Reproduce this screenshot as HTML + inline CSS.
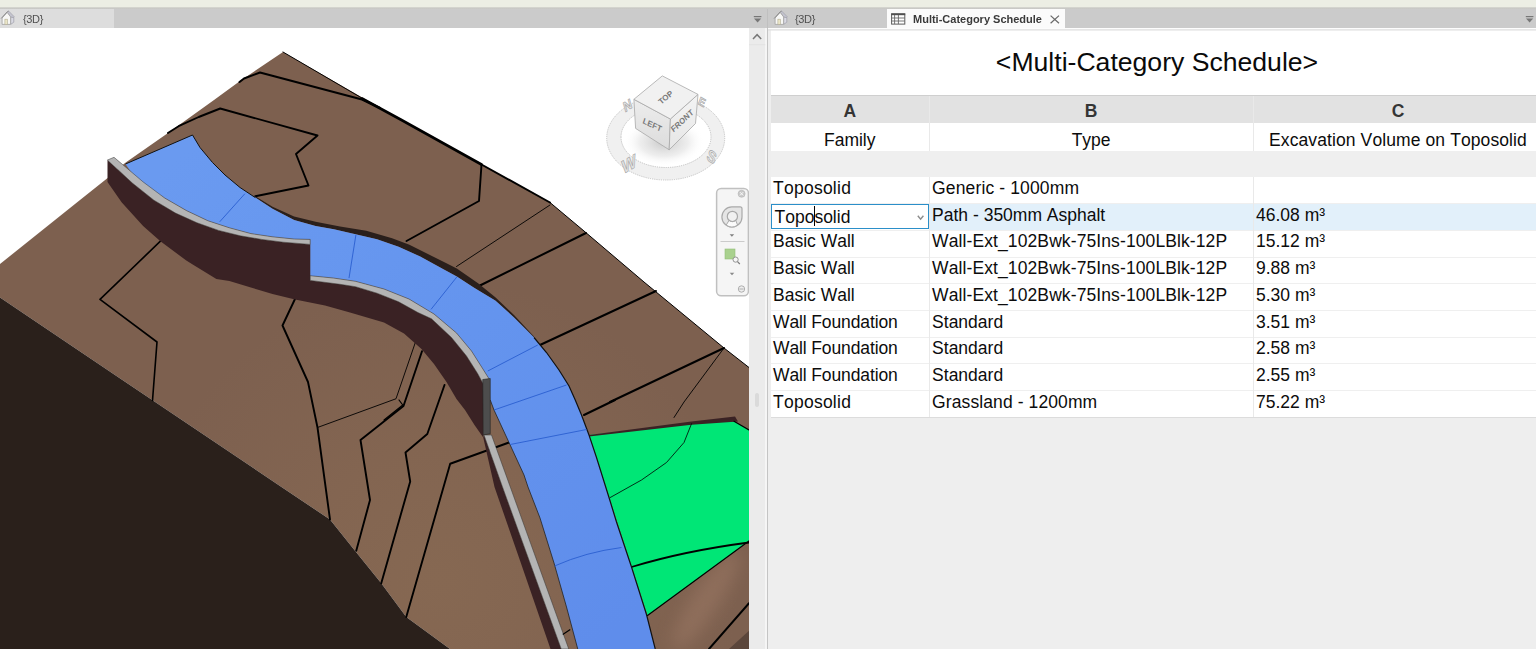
<!DOCTYPE html>
<html>
<head>
<meta charset="utf-8">
<title>Revit - Multi-Category Schedule</title>
<style>
html,body{margin:0;padding:0;}
body{width:1536px;height:649px;overflow:hidden;position:relative;background:#ffffff;font-family:"Liberation Sans",sans-serif;color:#111;}
.abs{position:absolute;}
#topstrip{left:0;top:0;width:1536px;height:8px;background:#eceee4;}
#topline{left:0;top:7px;width:1536px;height:2px;background:linear-gradient(#d9dad2,#c3c3c1);}
.tabbar{top:9px;height:19px;background:#cbcbcb;}
.tabtxt{will-change:transform;font-size:11px;color:#505050;letter-spacing:-0.35px;line-height:19px;top:9.5px;white-space:nowrap;}
#lscroll{left:749px;top:28px;width:18px;height:621px;background:linear-gradient(90deg,#ebebeb 0,#ebebeb 16.4px,#f5f5f5 16.4px,#f5f5f5 18px);}
#split{left:767px;top:9px;width:1px;height:640px;background:linear-gradient(#c0c0c0 0,#c0c0c0 19px,#c4c4c4 19px,#c4c4c4 100%);}
#rgut{left:768px;top:28px;width:768px;height:621px;background:#eeeeee;}
#sched{left:770.5px;top:30px;width:766px;height:619px;background:#eeeeee;}
.cell{position:absolute;white-space:nowrap;font-kerning:none;font-size:17.5px;line-height:26.7px;height:26.7px;color:#0c0c0c;}
.hdr{text-align:center;}
.vline{position:absolute;width:1px;background:#e9e9e9;}
.hline{position:absolute;height:1px;background:#efefef;left:0;width:766px;}
</style>
</head>
<body>
<!-- window top strip -->
<div id="topstrip" class="abs"></div>
<div id="topline" class="abs"></div>

<!-- LEFT PANE tab bar -->
<div class="abs tabbar" style="left:0;width:767px;"></div>
<div class="abs" style="left:0;top:9px;width:114px;height:19px;background:#dddddd;"></div>
<div class="abs tabtxt" style="left:22.5px;">{3D}</div>

<!-- RIGHT PANE tab bar -->
<div class="abs tabbar" style="left:768px;width:768px;"></div>
<div class="abs tabtxt" style="left:795px;">{3D}</div>
<div class="abs" style="left:886.5px;top:9px;width:178px;height:19px;background:#fbfbfb;"></div>
<div class="abs" style="left:913px;top:9.5px;font-size:11px;font-weight:bold;color:#3a3a3a;line-height:19px;white-space:nowrap;will-change:transform;">Multi-Category Schedule</div>

<!-- LEFT PANE 3D view -->
<div id="view3d" class="abs" style="left:0;top:28px;width:749px;height:621px;overflow:hidden;background:#fff;">
<svg id="scene" width="749" height="621" viewBox="0 28 749 621" style="position:absolute;left:0;top:0;">
<defs>
  <radialGradient id="gTerr" gradientUnits="userSpaceOnUse" cx="440" cy="580" r="300">
    <stop offset="0" stop-color="#866852"/><stop offset="0.45" stop-color="#836551"/><stop offset="1" stop-color="#7d604f"/>
  </radialGradient>
  <linearGradient id="gRoad" gradientUnits="userSpaceOnUse" x1="200" y1="140" x2="600" y2="640">
    <stop offset="0" stop-color="#6a9af0"/><stop offset="0.5" stop-color="#6494ee"/><stop offset="1" stop-color="#5f8deb"/>
  </linearGradient>
</defs>
<!-- terrain top surface -->
<polygon id="terrain" fill="url(#gTerr)" points="283,52 401.5,120 481.5,164.5 550,202.5 584,231 644,282 724,348 749,367.5 749,649 450,649 406.25,617 381.25,583.25 355,550.75 330,519.5 280,486 115,374.9 0,297.5 0,264 30,240 80,200 107,178.6 125,163 168,133 214,100 240,81"/>
<!-- terrain dark side -->
<polygon id="side" fill="#2a201b" points="0,297.5 115,374.9 280,486 330,519.5 355,550.75 381.25,583.25 406.25,617 450,649 0,649"/>
<defs><filter id="fBlur" x="-50%" y="-50%" width="200%" height="200%"><feGaussianBlur stdDeviation="8"/></filter></defs>
<ellipse cx="706" cy="600" rx="14" ry="58" transform="rotate(33 706 600)" fill="#9a7763" opacity="0.6" filter="url(#fBlur)"/>
<!-- darker bottom-right corner -->
<polygon fill="#5b463b" points="749,630.75 729,649 749,649"/>

<!-- contour lines on terrain -->
<g fill="none" stroke="#000" stroke-width="1.9" stroke-linejoin="round" stroke-linecap="round">
  <!-- thick outer right edge -->
  <polyline stroke-width="1" points="283,52 366,100.5"/>
  <polyline stroke-width="2.6" points="362,98.5 401.5,120 481.5,164.5"/>
  <polyline stroke-width="2" points="481.5,164.5 550,202.5"/>
  <polyline stroke-width="1" points="550,202.5 584,231 644,282 724,348 749,367.5"/>
  <!-- contour 1 -->
  <polyline stroke-width="2.1" points="239.5,82 244,78.5 260,72.5 362,99.5 380,108"/>
  <polyline points="481.5,164.5 479,201 406.5,241"/>
  <!-- contour 2 -->
  <polyline points="167.9,133 178.6,126.2 198.7,117 220.2,108.5 317.5,135.5 296,154 308.5,185.5 255.3,196.3"/>
  <!-- right-side lines -->
  <polyline stroke-width="0.9" points="550,205 456.5,266.5"/>
  <polyline stroke-width="2" points="586,233 480,285.5"/>
  <polyline stroke-width="2" points="656,291 540,345"/>
  <polyline stroke-width="2" points="724,348 610,402"/>
  <polyline stroke-width="0.9" points="724,348 684,402 674,417.5"/>
  <polyline stroke-width="2" points="615,400 584,415"/>
  <polyline stroke-width="2" points="749,603.25 709,649"/>
  <!-- lower-left contours -->
  <polyline stroke-width="1.6" points="160.4,241.2 100,299.4 157,342 152.5,400.5"/>
  <polyline points="295,299 282.5,325.5 308,382 317.5,427.5 330,519.5"/>
  <polyline stroke-width="0.9" points="317.5,427.5 396,398.75 415.75,341.25"/>
  <polyline points="422,351.25 403.5,406 360.5,440 370,500 356.25,550.75"/>
  <polyline points="444.5,385 427.3,434 405.5,452.5 410.2,481.5 381.25,583.25"/>
  <polyline points="509,442.5 450.2,463.75 406.25,617"/>
  <polyline stroke-width="1.2" points="399,400 402.75,405 384,420"/>
</g>

<!-- green grassland -->
<polygon fill="#00e676" points="589,435 691.5,423.75 734,421.25 749,430 749,541 647.5,615.5 630.25,562"/>
<polygon fill="#3a2224" points="589,435 691.5,421.5 735,416.5 738,421.5 691.5,424.75 589,436.5"/>
<g fill="none" stroke="#000" stroke-linecap="round">
  <polyline stroke-width="0.8" points="691.5,423.75 684,442.5 666.5,462.5 641.5,480 610.25,497.5"/>
  <path stroke-width="1.8" d="M631.5,567 Q684,551 749,542.5"/>
  <polyline stroke-width="1.2" points="647.5,615.5 749,541"/>
  <polyline stroke-width="1.2" points="734,421.25 749,430"/>
</g>

<!-- excavation dark strip above blue road -->
<polygon fill="#2a1f1b" points="255.3,196.3 272.5,206.7 294.1,216.4 315.6,221.8 340,226.5 366.3,230.7 392.1,238.2 409.4,244.7 430.9,255.5 456.8,268.4 478.4,283.5 495.6,297.5 514,315 534,336.5 534,337.5 514,317.5 495.6,300.8 474.1,287.8 456.8,276.6 443.9,269.5 420.2,256.5 398.6,246.8 377,239.3 355.5,234.3 333.9,229.2 315.6,226.1 294.1,220 272.5,208.8 255.3,197.6"/>
<!-- blue road -->
<polygon id="road" fill="url(#gRoad)" points="192.5,135 200,147.5 212.5,162.5 225,175 240,187.5 255.3,197.6 272.5,208.8 294.1,220 315.6,226.1 333.9,229.2 355.5,234.3 377,239.3 398.6,246.8 420.2,256.5 443.9,269.5 456.8,276.6 474.1,287.8 495.6,300.8 514,317.5 534,337.5 546.5,352.5 559,370 569,386 575.25,400 581.5,415 589,435 596.5,457.5 609,497.5 616.5,522 631.5,567 646.5,614.5 655.25,649 577.75,649 566.5,607 554,563 540,518 528,487 524,475 509,442.5 494,410 490.25,400 489,378.75 482.75,368.75 471.5,351 456.5,333 434,314 409,299 384,289 355.5,281.3 333.9,278.1 310.2,275.7 310.2,239.4 294.1,239 272.5,236.8 250.9,233.6 229.4,227.8 207.8,220.7 186.3,210.5 164.7,198 146.3,186.3 132.4,174 125.5,164"/>
<!-- road outline (thin dark) -->
<polyline fill="none" stroke="#111" stroke-width="1" points="125.5,164 192.5,135 200,147.5 212.5,162.5 225,175 240,187.5 255.3,197.6"/>
<polyline fill="none" stroke="#111" stroke-width="1.2" points="534,337.5 546.5,352.5 559,370 569,386 575.25,400 581.5,415 589,435 596.5,457.5 609,497.5 616.5,522 631.5,567 646.5,614.5 655.25,649"/>
<polyline fill="none" stroke="#222" stroke-width="0.8" points="490.25,400 494,410 509,442.5 524,475 528,487 540,518 554,563 566.5,607 577.75,649"/>
<!-- road joints -->
<g fill="none" stroke="#2a5fd0" stroke-width="0.9">
  <line x1="244.9" y1="193.7" x2="219.7" y2="221.8"/>
  <line x1="355.9" y1="235" x2="349" y2="278.1"/>
  <line x1="456.8" y1="277" x2="431" y2="309.4"/>
  <line x1="537.75" y1="345" x2="487.75" y2="371"/>
  <line x1="566.5" y1="385" x2="494" y2="410"/>
  <line x1="586.5" y1="429.5" x2="510.25" y2="444.5"/>
  <path d="M621.5,547.5 Q586,552 554.5,566"/>
</g>

<!-- wall 1 (maroon) -->
<polygon fill="#3a2224" points="107.5,160 118.3,170 132.3,183 153.9,200.2 175.5,213.1 197,222.8 218.6,230.4 240.2,235.8 261.7,239.4 283.3,242.2 310.2,244.4 310.2,280.4 340,284.3 355.5,286.7 377,293.2 398.6,301.8 418,312.6 431.5,318.75 451.5,337.5 466.5,356 477.75,373.75 483.25,384 483.25,437.5 474.5,425 465,410 456.5,399 446.5,382 434,364 421.5,349 404,333.5 384,322.5 350,312.5 325,305.5 295.1,299.4 272.5,294 250.9,287.5 229.4,281 216.4,278.9 186.3,260.6 160.4,241.2 143.1,226.1 121.6,202.3 107.5,181.9"/>
<!-- wall caps (grey) -->
<polygon fill="#b4b4b4" stroke="#333" stroke-width="0.5" points="107.5,160 114,157.3 129.1,170 143.1,181.9 164.7,198 186.3,210.5 207.8,220.7 229.4,227.8 250.9,233.6 272.5,236.8 294.1,239 310.2,239.4 310.2,244.4 283.3,242.2 261.7,239.4 240.2,235.8 218.6,230.4 197,222.8 175.5,213.1 153.9,200.2 132.3,183 118.3,170"/>
<polygon fill="#b4b4b4" stroke="#333" stroke-width="0.5" points="310.2,275.7 333.9,278.1 355.5,281.3 384,289 409,299 434,314 456.5,333 471.5,351 482.75,368.75 489,378.75 483.25,384 477.75,373.75 466.5,356 451.5,337.5 431.5,318.75 418,312.6 398.6,301.8 377,293.2 355.5,286.7 340,284.3 310.2,280.4"/>
<!-- wall end face (dark grey) -->
<polygon fill="#4d4d4d" stroke="#222" stroke-width="0.6" points="482.75,379.5 490.25,378.5 490.25,433.75 483.25,435"/>
<!-- lower foundation strips -->
<polygon fill="#3a2224" points="483.25,437.5 484,435 502.5,487 561.25,649 550.5,649 520.5,562 494.5,487"/>
<polygon fill="#b4b4b4" stroke="#333" stroke-width="0.5" points="484,435 491.5,435 510.3,487 568.75,649 561.25,649 502.5,487"/>
<polyline fill="none" stroke="#000" stroke-width="1.2" points="562.75,634.5 570.25,629.5"/>
<!--CUBE-START-->
<defs>
  <radialGradient id="gShadow" cx="0.5" cy="0.5" r="0.5"><stop offset="0" stop-color="#bdbdbd" stop-opacity="0.85"/><stop offset="0.6" stop-color="#d8d8d8" stop-opacity="0.45"/><stop offset="1" stop-color="#ffffff" stop-opacity="0"/></radialGradient>
  <linearGradient id="gLeft" x1="0" y1="0" x2="0" y2="1"><stop offset="0" stop-color="#ededed"/><stop offset="1" stop-color="#dcdcdc"/></linearGradient>
  <linearGradient id="gRight" x1="0" y1="0" x2="0" y2="1"><stop offset="0" stop-color="#f4f4f4"/><stop offset="1" stop-color="#e6e6e6"/></linearGradient>
</defs>
<g id="viewcube">
  <!-- compass ring -->
  <path fill="#f0f0f0" fill-rule="evenodd" stroke="#bdbdbd" stroke-width="0.9" stroke-dasharray="1.2 1" d="M606.7,138 a59,42 0 1,0 118,0 a59,42 0 1,0 -118,0 Z M621,137 a45,30.5 0 1,0 90,0 a45,30.5 0 1,0 -90,0 Z"/>
  <ellipse cx="664" cy="142" rx="40" ry="24" fill="url(#gShadow)"/>
  <g font-family="Liberation Sans, sans-serif" font-weight="bold" fill="#e3e3e3" stroke="#a4a4a4" stroke-width="0.6" text-anchor="middle" dominant-baseline="central">
    <text transform="translate(629,164) rotate(-30) skewX(-22)" font-size="17">W</text>
    <text transform="translate(711.8,156.5) rotate(36) skewX(18)" font-size="15">S</text>
    <text transform="translate(627.5,105.5) rotate(-34) skewX(-18)" font-size="13">N</text>
    <text transform="translate(702,101.8) rotate(30) skewX(10)" font-size="11">E</text>
  </g>
  <!-- cube -->
  <polygon points="633.9,99.3 670.4,119 669.2,149.8 635.6,128.4" fill="url(#gLeft)" stroke="#a8a8a8" stroke-width="0.8"/>
  <polygon points="670.4,119 698,94.4 695.5,123.5 669.2,149.8" fill="url(#gRight)" stroke="#a8a8a8" stroke-width="0.8"/>
  <polygon points="662.3,75.9 698,94.4 670.4,119 633.9,99.3" fill="#f1f1f1" stroke="#a8a8a8" stroke-width="0.8"/>
  <g font-family="Liberation Sans, sans-serif" fill="#787878" font-size="8" font-weight="bold" text-anchor="middle" letter-spacing="0.1">
    <text transform="translate(667.5,99.5) rotate(-40)">TOP</text>
    <text transform="translate(651.5,127.5) rotate(26) skewX(8)">LEFT</text>
    <text transform="translate(683.8,123) rotate(-43) skewX(-8)">FRONT</text>
  </g>
</g>
<g id="navbar">
  <rect x="716.6" y="188.4" width="31.8" height="107.4" rx="4.5" ry="4.5" fill="#f5f5f5" stroke="#c0c0c0" stroke-width="1.5"/>
  <circle cx="741.6" cy="193.8" r="3.5" fill="#c9c9c9" stroke="#b4b4b4" stroke-width="0.6"/>
  <path d="M740 192.2 l3.2 3.2 m0 -3.2 l-3.2 3.2" stroke="#fafafa" stroke-width="1"/>
  <!-- steering wheel -->
  <path d="M721.9,216.9 a10,10 0 0,1 10,-10 h8.2 q1.9,0 1.9,1.9 v8.1 a10,10 0 1,1 -20.1,0 Z" fill="#e5e5e5" stroke="#a9a9a9" stroke-width="1.2"/>
  <path d="M729.1,220.3 L726.2,225.1 A10,10 0 0,0 737.6,225.1 L735.7,220.3 A5.1,5.1 0 0,1 729.1,220.3 Z" fill="#fbfbfb" stroke="#ababab" stroke-width="1"/>
  <circle cx="732.4" cy="216.4" r="5.1" fill="#f1f1f1" stroke="#a9a9a9" stroke-width="1.2"/>
  <polygon points="729.6,234.3 734.2,234.3 731.9,236.8" fill="#808080"/>
  <line x1="720.5" y1="241.5" x2="744.5" y2="241.5" stroke="#c6c6c6" stroke-width="0.9"/>
  <!-- zoom region -->
  <rect x="725" y="249" width="10" height="10" fill="#a9d18e" stroke="#93bf78" stroke-width="0.6"/>
  <circle cx="735.6" cy="259.6" r="2.6" fill="#f6f6f6" stroke="#8a8a8a" stroke-width="0.9"/>
  <line x1="737.5" y1="261.6" x2="739.8" y2="264" stroke="#7a7a7a" stroke-width="1.2"/>
  <polygon points="729.7,272.8 734.3,272.8 732,275.2" fill="#8a8a8a"/>
  <circle cx="741.5" cy="289" r="3.2" fill="#ededed" stroke="#9e9e9e" stroke-width="0.8"/>
  <line x1="739.4" y1="289" x2="743.6" y2="289" stroke="#9e9e9e" stroke-width="0.8"/>
</g>
<!--CUBE-END-->
</svg>
</div>
<div id="lscroll" class="abs"></div>
<div class="abs" style="left:755px;top:393px;width:4px;height:14px;background:#dadada;border-radius:2px;"></div>
<div id="split" class="abs"></div>

<!-- RIGHT PANE schedule -->
<div id="rgut" class="abs"></div>
<div class="abs" style="left:768px;top:28px;width:768px;height:1px;background:#fdfdfd;"></div>
<div class="abs" style="left:768px;top:29px;width:768px;height:2px;background:#e6e6e6;"></div>
<div id="sched" class="abs">
  <!-- title -->
  <div class="abs" style="left:0;top:1px;width:766px;height:64.5px;background:#fff;"></div>
  <div class="abs" style="left:0;top:0;width:773px;height:65px;line-height:65px;text-align:center;font-size:26.6px;color:#0a0a0a;white-space:nowrap;">&lt;Multi-Category Schedule&gt;</div>
  <div class="abs" style="left:0;top:65px;width:766px;height:1px;background:#cfcfcf;"></div>
  <!-- header letters -->
  <div class="abs" style="left:0;top:66px;width:766px;height:27px;background:#e2e2e2;"></div>
  <!-- header names -->
  <div class="abs" style="left:0;top:93px;width:766px;height:27.6px;background:#fff;"></div>
  <!-- spacer row -->
  <div class="abs" style="left:0;top:120.6px;width:766px;height:26.4px;background:#efefef;"></div>
  <!-- data -->
  <div class="abs" style="left:0;top:147px;width:766px;height:240.3px;background:#fff;"></div>
  <div class="abs" style="left:0;top:387.3px;width:766px;height:1px;background:#dcdcdc;"></div>
<!--TABLE-START-->
  <div class="abs" style="left:158.5px;top:173.7px;width:608px;height:26.7px;background:#e2f0fa;"></div>
  <div class="hline" style="top:173.2px;"></div>
  <div class="hline" style="top:199.9px;"></div>
  <div class="hline" style="top:226.6px;"></div>
  <div class="hline" style="top:253.3px;"></div>
  <div class="hline" style="top:280.0px;"></div>
  <div class="hline" style="top:306.7px;"></div>
  <div class="hline" style="top:333.4px;"></div>
  <div class="hline" style="top:360.1px;"></div>
  <div class="vline" style="left:158.5px;top:66px;height:54.6px;"></div>
  <div class="vline" style="left:482.7px;top:66px;height:54.6px;"></div>
  <div class="vline" style="left:158.5px;top:147px;height:240.3px;"></div>
  <div class="vline" style="left:482.7px;top:147px;height:240.3px;"></div>
  <div class="cell hdr" style="left:0;width:158.5px;top:67.9px;font-weight:bold;font-size:17.5px;color:#353535;">A</div>
  <div class="cell hdr" style="left:158.5px;width:324.2px;top:67.9px;font-weight:bold;font-size:17.5px;color:#353535;">B</div>
  <div class="cell hdr" style="left:482.7px;width:289.6px;top:67.9px;font-weight:bold;font-size:17.5px;color:#353535;">C</div>
  <div class="cell hdr" style="left:0;width:158.5px;top:97.2px;">Family</div>
  <div class="cell hdr" style="left:158.5px;width:324.2px;top:97.2px;">Type</div>
  <div class="cell hdr" style="left:482.7px;width:289.6px;top:97.2px;letter-spacing:0.100px;">Excavation Volume on Toposolid</div>
  <div class="cell" style="left:2.5px;top:145.0px;letter-spacing:0.250px;">Toposolid</div>
  <div class="cell" style="left:161.6px;top:145.0px;letter-spacing:0.130px;">Generic - 1000mm</div>
  <div class="abs" style="left:0.5px;top:174.1px;width:155.6px;height:23.0px;border:1.6px solid #2b8fc9;background:#fff;"></div>
  <div class="cell" style="left:4px;top:173.8px;">Toposolid</div>
  <div class="abs" id="caret" style="left:43.4px;top:176.1px;width:1px;height:20px;background:#000;"></div>
  <svg class="abs" style="left:146.4px;top:184.9px;" width="8" height="6" viewBox="0 0 8 6"><path d="M0.8 0.8 L3.6 4.2 L6.4 0.8" fill="none" stroke="#8c8c8c" stroke-width="1.4"/></svg>
  <div class="cell" style="left:161.6px;top:171.7px;">Path - 350mm Asphalt</div>
  <div class="cell" style="left:485.5px;top:171.7px;">46.08 m³</div>
  <div class="cell" style="left:2.5px;top:198.4px;">Basic Wall</div>
  <div class="cell" style="left:161.6px;top:198.4px;letter-spacing:0.100px;">Wall-Ext_102Bwk-75Ins-100LBlk-12P</div>
  <div class="cell" style="left:485.5px;top:198.4px;">15.12 m³</div>
  <div class="cell" style="left:2.5px;top:225.1px;">Basic Wall</div>
  <div class="cell" style="left:161.6px;top:225.1px;letter-spacing:0.100px;">Wall-Ext_102Bwk-75Ins-100LBlk-12P</div>
  <div class="cell" style="left:485.5px;top:225.1px;">9.88 m³</div>
  <div class="cell" style="left:2.5px;top:251.8px;">Basic Wall</div>
  <div class="cell" style="left:161.6px;top:251.8px;letter-spacing:0.100px;">Wall-Ext_102Bwk-75Ins-100LBlk-12P</div>
  <div class="cell" style="left:485.5px;top:251.8px;">5.30 m³</div>
  <div class="cell" style="left:2.5px;top:278.5px;letter-spacing:-0.120px;">Wall Foundation</div>
  <div class="cell" style="left:161.6px;top:278.5px;">Standard</div>
  <div class="cell" style="left:485.5px;top:278.5px;">3.51 m³</div>
  <div class="cell" style="left:2.5px;top:305.2px;letter-spacing:-0.120px;">Wall Foundation</div>
  <div class="cell" style="left:161.6px;top:305.2px;">Standard</div>
  <div class="cell" style="left:485.5px;top:305.2px;">2.58 m³</div>
  <div class="cell" style="left:2.5px;top:331.9px;letter-spacing:-0.120px;">Wall Foundation</div>
  <div class="cell" style="left:161.6px;top:331.9px;">Standard</div>
  <div class="cell" style="left:485.5px;top:331.9px;">2.55 m³</div>
  <div class="cell" style="left:2.5px;top:358.6px;letter-spacing:0.250px;">Toposolid</div>
  <div class="cell" style="left:161.6px;top:358.6px;letter-spacing:0.100px;">Grassland - 1200mm</div>
  <div class="cell" style="left:485.5px;top:358.6px;">75.22 m³</div>
<!--TABLE-END-->
</div>
<!--CHROME-START-->
<!-- home icons -->
<svg class="abs" style="left:0;top:10px;" width="16" height="16" viewBox="0 10 16 16">
  <polygon points="10.6,16.8 13.8,17.4 13.8,22.2 10.6,24.4" fill="#d9d9e2" stroke="#a3a3ad" stroke-width="0.8"/>
  <polygon points="7.2,12.4 8.7,11.1 14.2,16.7 13.6,17.6 10.6,16.9" fill="#c4c4cf" stroke="#a0a0aa" stroke-width="0.7"/>
  <polygon points="2.1,18 7.2,12.4 10.6,16.9 10.6,24.4 2.1,24.4" fill="#f7f7f5" stroke="#a6a6a6" stroke-width="0.9"/>
  <polyline points="1.1,18.5 7.3,11.7 8.7,11.1" fill="none" stroke="#8e8e8e" stroke-width="1"/>
  <rect x="4.9" y="19.2" width="2.4" height="5.2" fill="#ebe6c8" stroke="#b3ad92" stroke-width="0.6"/>
</svg>
<svg class="abs" style="left:772.5px;top:10px;" width="16" height="16" viewBox="0 10 16 16">
  <polygon points="10.6,16.8 13.8,17.4 13.8,22.2 10.6,24.4" fill="#d9d9e2" stroke="#a3a3ad" stroke-width="0.8"/>
  <polygon points="7.2,12.4 8.7,11.1 14.2,16.7 13.6,17.6 10.6,16.9" fill="#c4c4cf" stroke="#a0a0aa" stroke-width="0.7"/>
  <polygon points="2.1,18 7.2,12.4 10.6,16.9 10.6,24.4 2.1,24.4" fill="#f7f7f5" stroke="#a6a6a6" stroke-width="0.9"/>
  <polyline points="1.1,18.5 7.3,11.7 8.7,11.1" fill="none" stroke="#8e8e8e" stroke-width="1"/>
  <rect x="4.9" y="19.2" width="2.4" height="5.2" fill="#ebe6c8" stroke="#b3ad92" stroke-width="0.6"/>
</svg>
<!-- schedule tab icon -->
<svg class="abs" style="left:891px;top:12.5px;" width="15" height="12" viewBox="0 0 15 12">
  <rect x="0.6" y="0.9" width="13.2" height="10.2" fill="#fff" stroke="#5c5c5c" stroke-width="1"/>
  <rect x="0.2" y="0.4" width="14" height="1.8" fill="#505050"/>
  <g stroke="#666" stroke-width="0.9"><line x1="0.6" y1="5" x2="13.8" y2="5"/><line x1="0.6" y1="8" x2="13.8" y2="8"/><line x1="3.6" y1="2" x2="3.6" y2="11"/><line x1="7.4" y1="2" x2="7.4" y2="11"/></g>
</svg>
<!-- tab close X -->
<svg class="abs" style="left:1049px;top:13.5px;" width="12" height="11" viewBox="0 0 12 11"><path d="M1.6 1.6 L10 9.2 M10 1.6 L1.6 9.2" stroke="#6a6a6a" stroke-width="1.25" fill="none"/></svg>
<!-- tab list dropdown icons -->
<svg class="abs" style="left:752.8px;top:14.7px;" width="10" height="9" viewBox="0 0 10 9"><rect x="0.8" y="1" width="7.6" height="1.2" fill="#777"/><polygon points="1,3.6 8.2,3.6 4.6,7.4" fill="#777"/></svg>
<svg class="abs" style="left:1525.3px;top:14.7px;" width="10" height="9" viewBox="0 0 10 9"><rect x="0.8" y="1" width="7.6" height="1.2" fill="#777"/><polygon points="1,3.6 8.2,3.6 4.6,7.4" fill="#777"/></svg>
<!-- left scrollbar up arrow -->
<svg class="abs" style="left:749px;top:28px;" width="18" height="18" viewBox="0 0 18 18"><rect x="0" y="16.4" width="16.4" height="0.8" fill="#e0e0e0"/><path d="M4 11 L8.1 6.7 L12.2 11" fill="none" stroke="#787878" stroke-width="1.5"/></svg>
<!--CHROME-END-->
</body>
</html>
